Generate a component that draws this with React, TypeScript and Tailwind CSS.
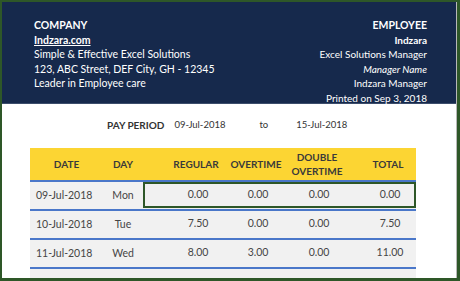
const rows = [
  { date: '09-Jul-2018', day: 'Mon', regular: '0.00', overtime: '0.00', double: '0.00', total: '0.00' },
  { date: '10-Jul-2018', day: 'Tue', regular: '7.50', overtime: '0.00', double: '0.00', total: '7.50' },
  { date: '11-Jul-2018', day: 'Wed', regular: '8.00', overtime: '3.00', double: '0.00', total: '11.00' },
]

// column widths: date, day | regular, overtime, double, total
const cols = 'grid grid-cols-[73px_40px_83px_60px_62px_68px]'
const nums = 'grid grid-cols-[83px_60px_62px_68px]'

function Numbers({ r }: { r: (typeof rows)[number] }) {
  return (
    <>
      <div className="pl-[23px] text-center">{r.regular}</div>
      <div className="text-center">{r.overtime}</div>
      <div className="text-center">{r.double}</div>
      <div className="pl-[12px] text-center">{r.total}</div>
    </>
  )
}

export default function App() {
  return (
    <div
      className="w-[460px] h-[281px] overflow-hidden bg-white border-t-2 border-l-2 border-b-[3px] border-r-[3px] border-[#2e5728] flex flex-col"
      style={{ fontFamily: 'Lato, "Liberation Sans", sans-serif' }}
    >
      <div className="flex-1 flex flex-col border-r border-[#b8b8b8] min-h-0">
        {/* header band */}
        <div className="h-[102px] shrink-0 bg-[#16294c] border-b border-[#3c4d6b] flex justify-between pl-[32px] pr-[29px] pt-[16px] text-white text-[10.5px] leading-[14.5px]">
          <div>
            <div className="font-bold">COMPANY</div>
            <div className="font-bold underline">Indzara.com</div>
            <div>Simple &amp; Effective Excel Solutions</div>
            <div>123, ABC Street, DEF City, GH - 12345</div>
            <div>Leader in Employee care</div>
          </div>
          <div className="text-right text-[10px]">
            <div className="font-bold text-[10.5px]">EMPLOYEE</div>
            <div className="font-bold">Indzara</div>
            <div>Excel Solutions Manager</div>
            <div className="italic">Manager Name</div>
            <div>Indzara Manager</div>
            <div>Printed on Sep 3, 2018</div>
          </div>
        </div>

        {/* pay period */}
        <div className="h-[44px] shrink-0 flex items-center text-[#333] text-[9.5px] pb-[1px]">
          <span className="ml-[105px] font-bold text-[10px]">PAY PERIOD</span>
          <span className="ml-[10px]">09-Jul-2018</span>
          <span className="ml-[34px]">to</span>
          <span className="ml-[28px]">15-Jul-2018</span>
        </div>

        {/* table */}
        <div className="ml-[28px] w-[386px] text-[10.5px]">
          <div className={`${cols} h-[34px] bg-[#fcd533] items-center font-bold text-[10px] text-[#3a3a3a] leading-[14px] border-b-2 border-[#4a77c9]`}>
            <div className="text-center">DATE</div>
            <div className="text-center">DAY</div>
            <div className="pl-[23px] text-center">REGULAR</div>
            <div className="text-center">OVERTIME</div>
            <div className="text-center">DOUBLE<br />OVERTIME</div>
            <div className="pl-[12px] text-center">TOTAL</div>
          </div>
          {rows.map((r, i) => (
            <div key={r.date} className={`${cols} h-[29px] bg-[#f1f1f1] items-stretch text-[#454545] border-b-2 border-[#4a77c9]`}>
              <div className="pl-[6px] flex items-center">{r.date}</div>
              <div className="flex items-center justify-center">{r.day}</div>
              <div
                className={`col-span-4 ${nums} items-center border-2 mb-[1px] ${i === 0 ? 'border-[#2e5728]' : 'border-transparent'}`}
              >
                <Numbers r={r} />
              </div>
            </div>
          ))}
          <div className="h-[10px] bg-[#f1f1f1]" />
        </div>
      </div>
    </div>
  )
}
